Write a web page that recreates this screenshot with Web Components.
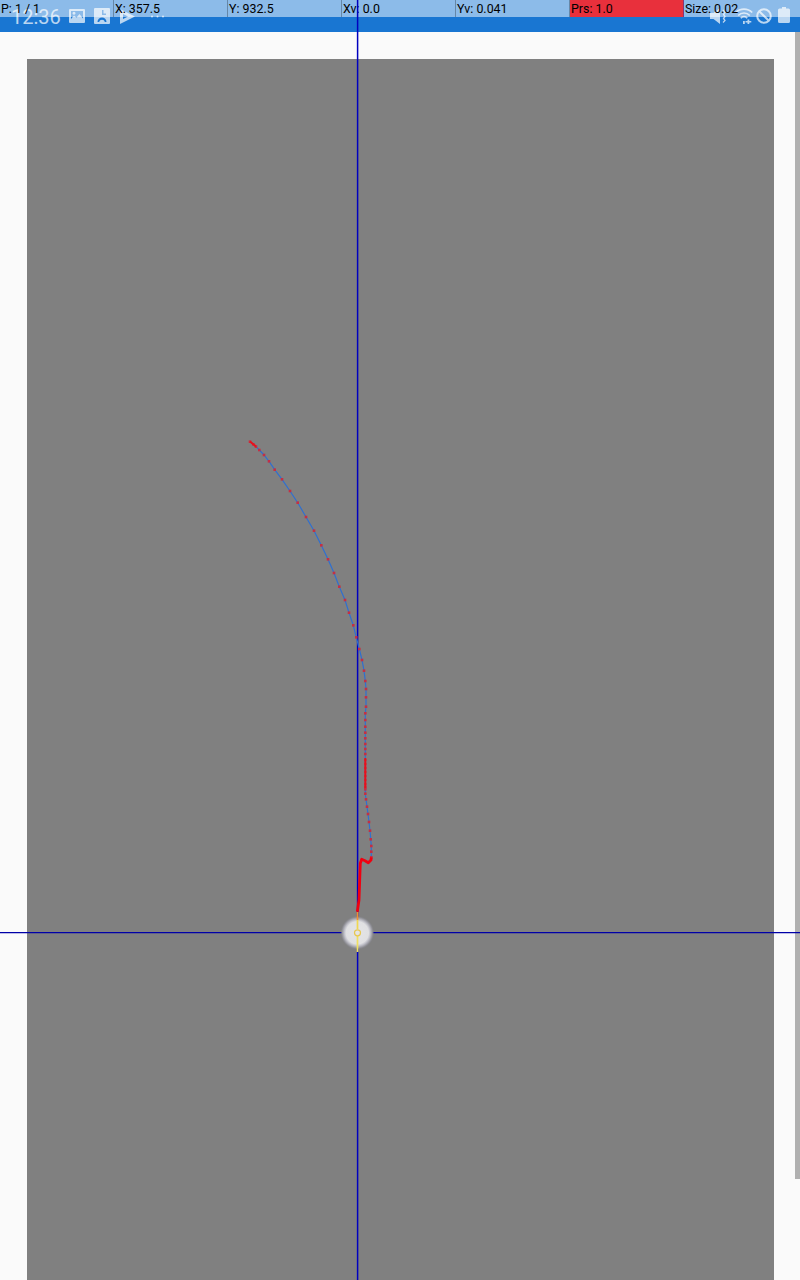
<!DOCTYPE html>
<html>
<head>
<meta charset="utf-8">
<style>
  html, body { margin: 0; padding: 0; height: 100%; overflow: hidden; background: #fafafa; }
</style>
</head>
<body>
<pointer-location-app></pointer-location-app>
<script>
// trace points sampled along the pointer path
const SAMPLES = [
  [250,441.7],[253.3,444.3],[256,446.7],[259.3,450],[264,455],[269,461.3],[274.7,469.7],
  [282,479.3],[290,491],[297.7,502.7],[306,517],[314,530.7],[321.3,545.3],[328,559.3],
  [334,573],[339.3,586.7],[345,600],[349,612.7],[353.3,625.3],[356.3,637.3],[359.3,649],
  [362,660],[364,670.7],[365.3,681],[366,689],[366,697.3],[366,706.7],[365.3,713.3],
  [365.3,720],[365.3,726.7],[365.3,732.7],[365.3,738.3],[365.3,744],[365.3,749],[365.3,754],
  [365.3,760],[365.3,764],[365.3,768],[365.3,772],[365.3,776],[365.3,780],[365.3,784],[365.3,787],
  [365.3,789.3],[365.3,793.7],[366,799.3],[367,806.7],[368,814],[369,822],[370,830.7],
  [370.7,839.3],[371.3,846],[371.3,851.7],[371.3,857.3]
];
const HOOK = [
  [371.3,857.3],[371,860],[368.3,862.7],[365,860.7],[361.7,859.3],[360.3,863.3],
  [359.7,880],[359,900],[357.3,911.7]
];

class StatusBar extends HTMLElement {
  constructor() {
    super();
    this.attachShadow({ mode: 'open' }).innerHTML = `
      <style>
        :host {
          display: flex;
          align-items: center;
          height: 32px;
          background: #1976d2;
          color: #fff;
          font-family: Roboto, sans-serif;
        }
        .left, .right { display: flex; align-items: center; opacity: .7; }
        .left { padding-left: 11px; }
        .right { margin-left: auto; padding-right: 10px; }
        .time { font-size: 20px; width: 49px; margin-right: 9px; position: relative; top: 1px; white-space: nowrap; }
        svg { display: block; fill: #fff; }
      </style>
      <div class="left">
        <span class="time">12:36</span>
        <svg width="16" height="14" viewBox="0 0 16 14" style="margin-right:9px"><path fill-rule="evenodd" d="M1 0h14a1 1 0 0 1 1 1v12a1 1 0 0 1-1 1H1a1 1 0 0 1-1-1V1a1 1 0 0 1 1-1zM2 2v8l3-3.500 2.500 2 3-3.500L14 9.500V2zM5 2.800a1.500 1.500 0 1 0 .01 0z"/></svg>
        <svg width="16" height="16" viewBox="0 0 16 16" style="margin-right:10px"><path fill-rule="evenodd" d="M1 0h14a1 1 0 0 1 1 1v14a1 1 0 0 1-1 1H1a1 1 0 0 1-1-1V1a1 1 0 0 1 1-1zM8 2v5h4V5.500H9.500V2zM3.500 14h1.600a3 3 0 0 1 5.800 0h1.600a4.500 4.500 0 0 0-9 0z"/></svg>
        <svg width="15" height="15" viewBox="0 0 15 15" style="margin-right:15px"><path d="M0 0l15 7.500L0 15zM3 5v5l5-2.500z" fill-rule="evenodd"/></svg>
        <svg width="15" height="3" viewBox="0 0 15 3"><circle cx="2" cy="1.500" r="1"/><circle cx="7.500" cy="1.500" r="1"/><circle cx="13" cy="1.500" r="1"/></svg>
      </div>
      <div class="right">
        <svg width="17" height="16" viewBox="0 0 17 16" style="margin-right:8px"><path d="M0 5h3.500L10 0v16l-6.500-5H0z"/><path d="M13 2l2 2.500-1.500 2 1.500 2-1.500 2 1.500 2-2 2" fill="none" stroke="#fff" stroke-width="1.300"/></svg>
        <svg width="18" height="16" viewBox="0 0 18 16" style="margin-right:3px"><path d="M.8 4.500a11.500 11.500 0 0 1 16.400 0M3.200 7.500a8 8 0 0 1 11.600 0M5.800 10.300a4 4 0 0 1 6.400 0" fill="none" stroke="#fff" stroke-width="1.700"/><path d="M8 13h1.800v3H8zM12.500 11.500h1.800v4.500h-1.800zM10.500 13h5.800v1.600h-5.800z"/></svg>
        <svg width="16" height="16" viewBox="0 0 16 16" style="margin-right:6px"><circle cx="8" cy="8" r="6.800" fill="none" stroke="#fff" stroke-width="2"/><path d="M3.200 3.200l9.600 9.600" stroke="#fff" stroke-width="2"/></svg>
        <svg width="12" height="16" viewBox="0 0 12 16" style="position:relative;top:-1px"><path d="M4 0h4v1.500h2.500a1.500 1.500 0 0 1 1.500 1.500v11.500a1.500 1.500 0 0 1-1.500 1.500h-9A1.500 1.500 0 0 1 0 14.500V3a1.500 1.500 0 0 1 1.500-1.500H4z"/></svg>
      </div>
    `;
  }
}
customElements.define('status-bar', StatusBar);

class InfoCell extends HTMLElement {
  constructor() {
    super();
    this.attachShadow({ mode: 'open' }).innerHTML = `
      <style>
        :host {
          display: block;
          height: 17px;
          box-sizing: border-box;
          padding-left: 1px;
          border-right: 1px solid rgba(0,0,0,.28);
          font: 12.400px/17px Roboto, sans-serif;
          color: #000;
          white-space: nowrap;
        }
        :host([alert]) { background: #e8303c; border-right-color: rgba(60,60,160,.6); }
        :host(:last-child) { border-right: 0; }
      </style>
      <slot></slot>
    `;
  }
}
customElements.define('info-cell', InfoCell);

class InfoBar extends HTMLElement {
  constructor() {
    super();
    this.attachShadow({ mode: 'open' }).innerHTML = `
      <style>
        :host {
          position: absolute;
          top: 0; left: 0; right: 0;
          display: grid;
          grid-template-columns: repeat(6, 114px) 1fr;
          height: 17px;
          background: rgba(255,255,255,.5);
        }
      </style>
      <slot></slot>
    `;
  }
}
customElements.define('info-bar', InfoBar);

class TracePanel extends HTMLElement {
  constructor() {
    super();
    const path = SAMPLES.map(p => p.join(',')).join(' ');
    const hook = HOOK.map(p => p.join(',')).join(' ');
    const dots = SAMPLES.map(p =>
      `<rect x="${p[0] - 1.3}" y="${p[1] - 1.3}" width="2.6" height="2.6" fill="#d02838" opacity=".9"/>`).join('');
    this.attachShadow({ mode: 'open' }).innerHTML = `
      <style>
        :host { position: absolute; inset: 0; display: block; pointer-events: none; }
        svg { display: block; width: 800px; height: 1280px; }
      </style>
      <svg viewBox="0 0 800 1280">
        <defs>
          <radialGradient id="glow">
            <stop offset="0" stop-color="#e4e4e6"/>
            <stop offset=".66" stop-color="#e0e0e2"/>
            <stop offset=".76" stop-color="#c2c2ca"/>
            <stop offset=".88" stop-color="#98989f"/>
            <stop offset="1" stop-color="#808088" stop-opacity="0"/>
          </radialGradient>
        </defs>
        <line x1="357.600" y1="0" x2="357.600" y2="1280" stroke="#0000c0" stroke-width="1.500"/>
        <line x1="0" y1="932.700" x2="800" y2="932.700" stroke="#0000a8" stroke-width="1.200"/>
        <polyline points="${path}" fill="none" stroke="#2f6fd0" stroke-width="1.200"/>
        ${dots}
        <line x1="250" y1="441.500" x2="256" y2="446.500" stroke="#e8101c" stroke-width="2"/>
        <line x1="365.300" y1="758" x2="365.300" y2="788" stroke="#e8101c" stroke-width="1.800"/>
        <polyline points="${hook}" fill="none" stroke="#f00010" stroke-width="2.800" stroke-linejoin="round"/>
        <circle cx="357.300" cy="932.800" r="17" fill="url(#glow)"/>
        <line x1="357.500" y1="912" x2="357.500" y2="920" stroke="#f09030" stroke-width="1.700"/>
        <line x1="357.500" y1="920" x2="357.500" y2="929" stroke="#f0d850" stroke-width="1.700"/>
        <line x1="357.500" y1="936" x2="357.500" y2="952" stroke="#f0e060" stroke-width="1.700"/>
        <circle cx="357.500" cy="932.800" r="3" fill="none" stroke="#e8c850" stroke-width="1.200"/>
      </svg>
    `;
  }
}
customElements.define('trace-panel', TracePanel);

class PointerLocationApp extends HTMLElement {
  constructor() {
    super();
    this.attachShadow({ mode: 'open' }).innerHTML = `
      <style>
        :host {
          display: flex;
          flex-direction: column;
          position: relative;
          width: 800px;
          height: 1280px;
          overflow: hidden;
          background: #fafafa;
        }
        .body { flex: 1; padding: 27px 26px 0 27px; min-height: 0; }
        .canvas { height: 100%; background: #808080; }
        .scroll {
          position: absolute;
          top: 32px; right: 0;
          width: 5px; height: 1147px;
          background: #b0b0b0;
        }
      </style>
      <status-bar></status-bar>
      <div class="body"><div class="canvas"></div></div>
      <div class="scroll"></div>
      <info-bar>
        <info-cell>P: 1 / 1</info-cell>
        <info-cell>X: 357.5</info-cell>
        <info-cell>Y: 932.5</info-cell>
        <info-cell>Xv: 0.0</info-cell>
        <info-cell>Yv: 0.041</info-cell>
        <info-cell alert>Prs: 1.0</info-cell>
        <info-cell>Size: 0.02</info-cell>
      </info-bar>
      <trace-panel></trace-panel>
    `;
  }
}
customElements.define('pointer-location-app', PointerLocationApp);
</script>
</body>
</html>
